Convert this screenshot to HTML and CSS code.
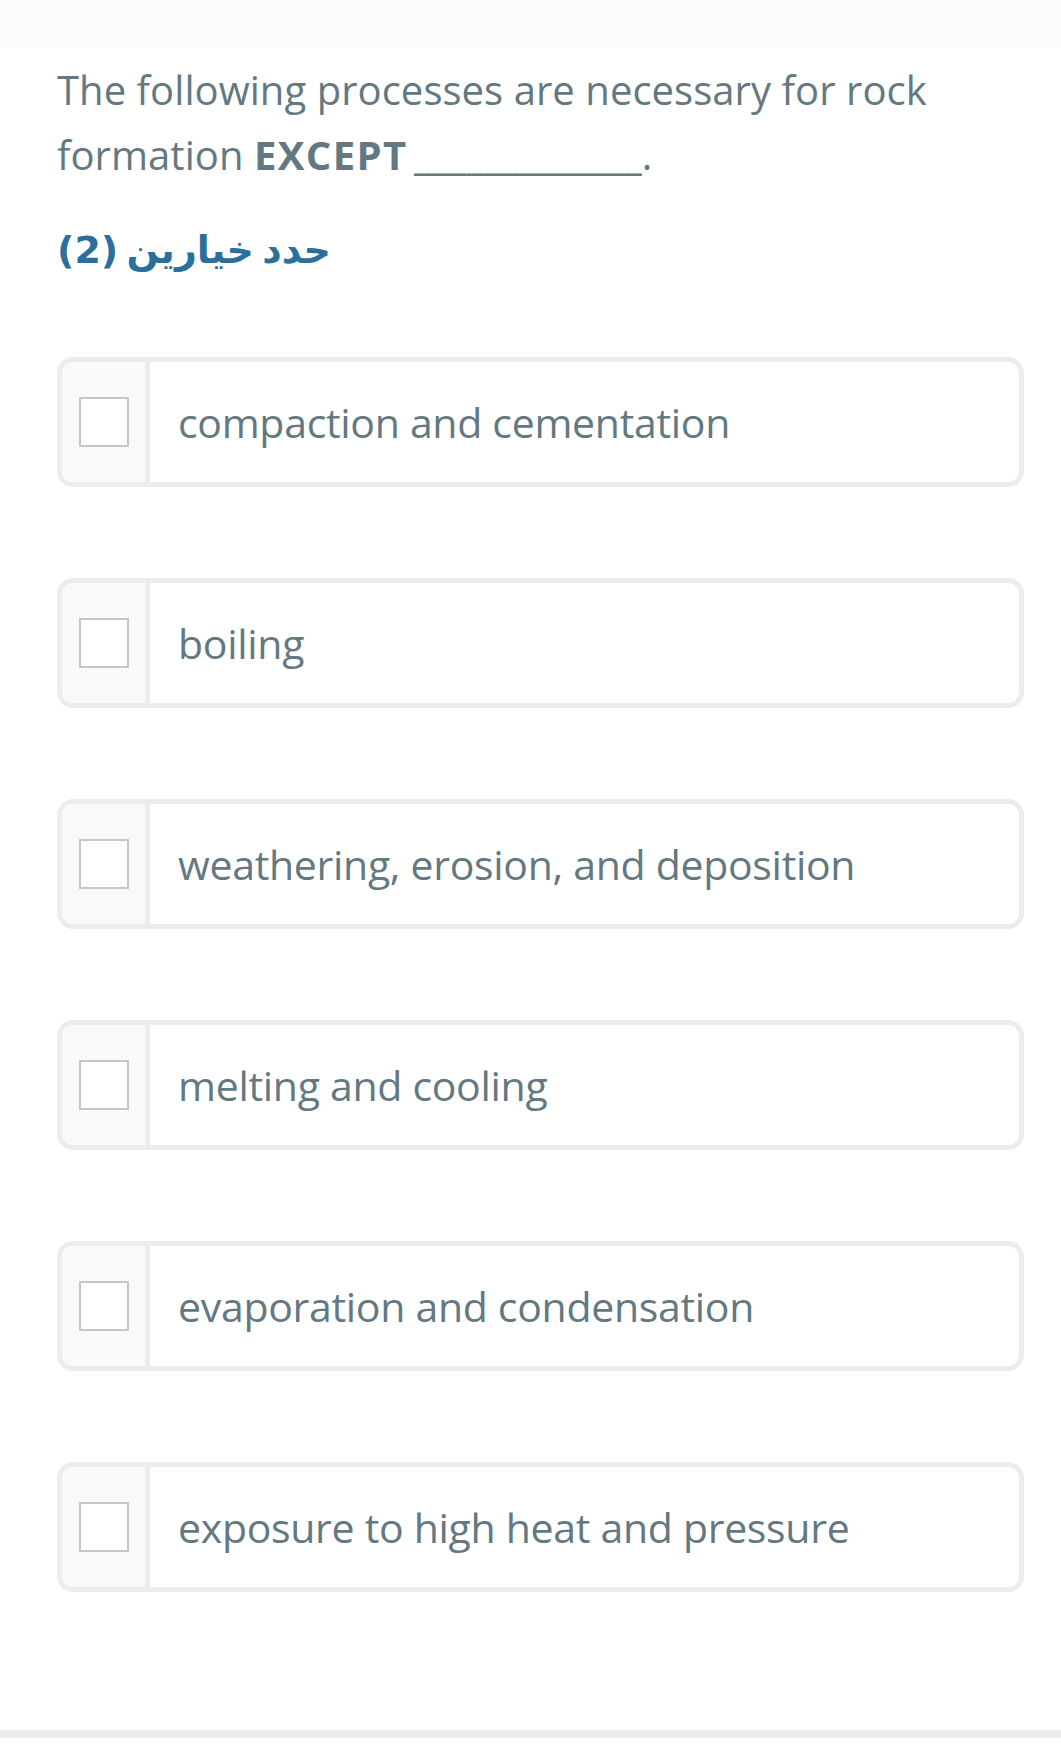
FILE: index.html
```html
<!DOCTYPE html>
<html lang="en">
<head>
<meta charset="utf-8">
<title>Question</title>
<link rel="stylesheet" href="styles.css">
</head>
<body>
<div class="topbar"></div>
<main class="content">
  <p class="question">The following processes are necessary for rock formation <b>EXCEPT</b> <span class="blank">_____________</span>.</p>
  <p class="hint"><span dir="rtl" class="hint-text">حدد خيارين (2)</span></p>
  <ul class="options">
    <li class="option"><div class="check-col"><span class="box"></span></div><div class="label">compaction and cementation</div></li>
    <li class="option"><div class="check-col"><span class="box"></span></div><div class="label">boiling</div></li>
    <li class="option"><div class="check-col"><span class="box"></span></div><div class="label">weathering, erosion, and deposition</div></li>
    <li class="option"><div class="check-col"><span class="box"></span></div><div class="label">melting and cooling</div></li>
    <li class="option"><div class="check-col"><span class="box"></span></div><div class="label">evaporation and condensation</div></li>
    <li class="option"><div class="check-col"><span class="box"></span></div><div class="label">exposure to high heat and pressure</div></li>
  </ul>
</main>
<div class="bottombar"></div>
</body>
</html>
```

FILE: styles.css
```css
html, body {
  margin: 0;
  padding: 0;
  background: #ffffff;
}
body {
  font-family: "Open Sans", "Noto Sans", sans-serif;
  color: #637880;
  height: 1749px;
  display: flex;
  flex-direction: column;
}
.topbar {
  height: 47px;
  background: #fbfcfc;
  flex: none;
}
.content {
  padding: 0 37px 0 57px;
  flex: 1;
}
.question {
  margin: 10px 0 0 0;
  font-size: 40px;
  line-height: 65px;
  letter-spacing: 0.05px;
  word-spacing: 0;
}
.question b {
  font-weight: 700;
  letter-spacing: 1.4px;
}
.blank {
  letter-spacing: 0;
  font-size: 40px;
  margin-left: -4px;
}
.hint {
  margin: 36px 0 0 0;
  font-family: "DejaVu Sans", sans-serif;
  font-weight: 700;
  font-size: 38px;
  line-height: 54px;
  color: #2b6f9c;
}
.hint-text {
  unicode-bidi: isolate;
  word-spacing: -5px;
}
.options {
  list-style: none;
  margin: 80px 0 0 0;
  padding: 0;
  display: flex;
  flex-direction: column;
  gap: 91px;
}
.option {
  display: flex;
  height: 130px;
  box-sizing: border-box;
  border: 5px solid #ececec;
  border-radius: 16px;
  overflow: hidden;
}
.check-col {
  width: 83px;
  flex: none;
  background: #f9f9f9;
  border-right: 5px solid #ececec;
  display: flex;
  align-items: center;
  justify-content: center;
}
.box {
  width: 50px;
  height: 50px;
  box-sizing: border-box;
  border: 2px solid #c6c6c6;
  background: #ffffff;
}
.label {
  display: flex;
  align-items: center;
  padding-left: 28px;
  font-size: 41px;
  letter-spacing: -0.3px;
}
.bottombar {
  height: 8px;
  background: #ebebeb;
  margin-bottom: 11px;
  flex: none;
}
```
